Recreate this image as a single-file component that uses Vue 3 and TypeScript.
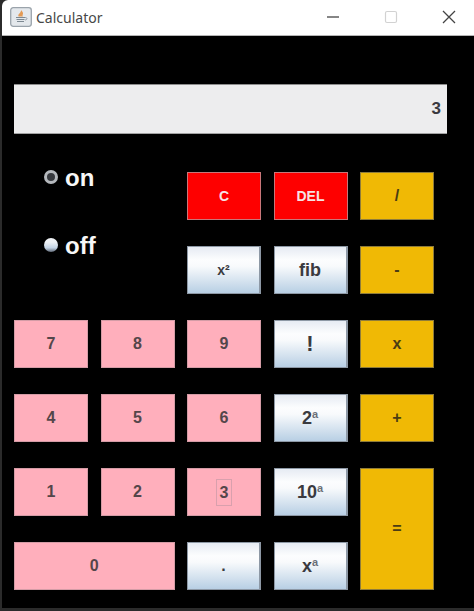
<script setup lang="ts">
interface Key {
  label: string
  kind: 'red' | 'steel' | 'amber' | 'pink'
  sup?: string
  size?: string
  wide?: boolean
  tall?: boolean
  focus?: boolean
}

const keys: Key[] = [
  { label: 'C', kind: 'red', size: 'small' },
  { label: 'DEL', kind: 'red', size: 'small' },
  { label: '/', kind: 'amber' },
  { label: 'x²', kind: 'steel', size: 'small' },
  { label: 'fib', kind: 'steel', size: 'large' },
  { label: '-', kind: 'amber' },
  { label: '7', kind: 'pink' },
  { label: '8', kind: 'pink' },
  { label: '9', kind: 'pink' },
  { label: '!', kind: 'steel', size: 'xlarge' },
  { label: 'x', kind: 'amber' },
  { label: '4', kind: 'pink' },
  { label: '5', kind: 'pink' },
  { label: '6', kind: 'pink' },
  { label: '2', sup: 'a', kind: 'steel', size: 'large' },
  { label: '+', kind: 'amber' },
  { label: '1', kind: 'pink' },
  { label: '2', kind: 'pink' },
  { label: '3', kind: 'pink', focus: true },
  { label: '10', sup: 'a', kind: 'steel', size: 'large' },
  { label: '=', kind: 'amber', tall: true },
  { label: '0', kind: 'pink', wide: true },
  { label: '.', kind: 'steel' },
  { label: 'x', sup: 'a', kind: 'steel', size: 'large' }
]
</script>

<template>
  <div class="screen">
    <div class="window">
      <header class="titlebar">
        <svg class="app-icon" viewBox="0 0 22 20" aria-hidden="true">
          <rect x="0.7" y="0.7" width="20.6" height="18.6" rx="2.5" fill="#e4e8ec" stroke="#9aa3ab" stroke-width="1.3" />
          <path d="M11 3c1.5 1.8 2.6 3 1.8 4.6-.4.8-.3 1.3.2 1.9H8.6C7.6 8 9 7 10 5.800 10.600 5 11.100 4 11 3z" fill="#e39a55" />
          <path d="M6 10.500h9.500M6.500 12.500h8M7 14.500h7" stroke="#7d8992" stroke-width="1.200" fill="none" />
          <path d="M15.500 10.500c2 0 2 2.500-.5 2.500" stroke="#8e99a2" stroke-width="0.900" fill="none" />
        </svg>
        <span class="title">Calculator</span>
        <div class="controls">
          <svg viewBox="0 0 14 14" aria-hidden="true"><path d="M1 7h12" stroke="#444" stroke-width="1.300" /></svg>
          <svg viewBox="0 0 14 14" aria-hidden="true"><rect x="1.500" y="1.500" width="11" height="11" rx="1.500" fill="none" stroke="#d2d2d2" stroke-width="1.200" /></svg>
          <svg viewBox="0 0 14 14" aria-hidden="true"><path d="M1 1l12 12M13 1L1 13" stroke="#444" stroke-width="1.300" /></svg>
        </div>
      </header>

      <main class="body">
        <div class="display">3</div>

        <section class="pad">
          <div class="modes">
            <div class="mode">
              <span class="radio selected"></span>
              <span class="mode-label">on</span>
            </div>
            <div class="mode">
              <span class="radio"></span>
              <span class="mode-label">off</span>
            </div>
          </div>

          <button
            v-for="(key, i) in keys"
            :key="i"
            type="button"
            class="key"
            :class="[key.kind, key.size, { wide: key.wide, tall: key.tall }]"
          >
            <span :class="{ focus: key.focus }">{{ key.label }}<sup v-if="key.sup">{{ key.sup }}</sup></span>
          </button>
        </section>
      </main>
    </div>
  </div>
</template>

<style>
html,
body {
  margin: 0;
  background: #2b2b2b;
}
</style>

<style scoped>
.screen {
  width: 474px;
  height: 611px;
  overflow: hidden;
  box-sizing: border-box;
  padding: 0 0 3px 2px;
  background: #2b2b2b;
}

.window {
  height: 100%;
  display: flex;
  flex-direction: column;
  background: #000;
  border-top-left-radius: 6px;
  overflow: hidden;
}

.titlebar {
  height: 36px;
  flex: none;
  box-sizing: border-box;
  display: flex;
  align-items: center;
  padding: 0 18px 1px 8px;
  background: #fff;
  border-bottom: 1px solid #b4b4b4;
}

.app-icon {
  width: 22px;
  height: 20px;
}

.title {
  margin-left: 4px;
  font: 14px "Noto Sans", sans-serif;
  color: #474747;
}

.controls {
  margin-left: auto;
  display: flex;
  gap: 44px;
}

.controls svg {
  width: 14px;
  height: 14px;
  display: block;
}

.body {
  flex: 1;
  padding: 48px 0 0 12px;
  font-family: "Liberation Sans", Arial, sans-serif;
}

.display {
  width: 433px;
  height: 50px;
  box-sizing: border-box;
  display: flex;
  align-items: center;
  justify-content: flex-end;
  padding-right: 6px;
  background: #ededee;
  border-top: 1px solid #8d8d8d;
  border-bottom: 1px solid #a2a2a2;
  font-size: 17px;
  font-weight: 700;
  color: #3a3a3f;
}

.pad {
  margin-top: 38px;
  display: grid;
  grid-template-columns: repeat(5, 74px);
  grid-auto-rows: 48px;
  column-gap: 12.500px;
  row-gap: 26px;
}

.modes {
  grid-column: 1 / 3;
  grid-row: 1 / 3;
  margin: -9px 0 0 30px;
  display: flex;
  flex-direction: column;
  gap: 40px;
}

.mode {
  height: 28px;
  display: flex;
  align-items: center;
  gap: 7px;
}

.radio {
  width: 14px;
  height: 14px;
  box-sizing: border-box;
  border-radius: 50%;
  background: linear-gradient(#eef1f5 30%, #c4d4e6 70%, #5f6875);
}

.radio.selected {
  background: #36393e;
  border: 3px solid #b4b8bd;
}

.mode-label {
  font-size: 24px;
  font-weight: 700;
  color: #f7f7f7;
  line-height: 28px;
  position: relative;
  top: 1px;
}

.key {
  margin: 0;
  padding: 0;
  box-sizing: border-box;
  display: flex;
  align-items: center;
  justify-content: center;
  border: 1px solid #8a8f96;
  font: 700 16px "Liberation Sans", Arial, sans-serif;
  color: #3a3a3f;
}

.key.small {
  font-size: 14px;
}

.key.large {
  font-size: 18px;
}

.key.xlarge {
  font-size: 22px;
}

.key sup {
  font-size: 11px;
  font-weight: 700;
  color: #6b7078;
  line-height: 0;
  vertical-align: 6px;
}

.key.wide {
  grid-column: span 2;
}

.key.tall {
  grid-row: span 2;
}

.red {
  background: #fe0000;
  border-color: #c9777a;
  color: #f6e3e3;
}

.amber {
  background: #f0b905;
  border-color: #8f7c3a;
  color: #4a3c14;
}

.pink {
  background: #ffafbc;
  border-color: #d49ca6;
  color: #54464a;
}

.steel {
  background: linear-gradient(#e6ebf3, #fcfdfe 28%, #f8fafc 42%, #b8cfe4);
  border-color: #8d98a5;
  border-right: 2px solid #8d98a5;
}

.focus {
  display: inline-block;
  padding: 4px 3px;
  line-height: 17px;
  outline: 1px solid #d9a0ad;
}
</style>
